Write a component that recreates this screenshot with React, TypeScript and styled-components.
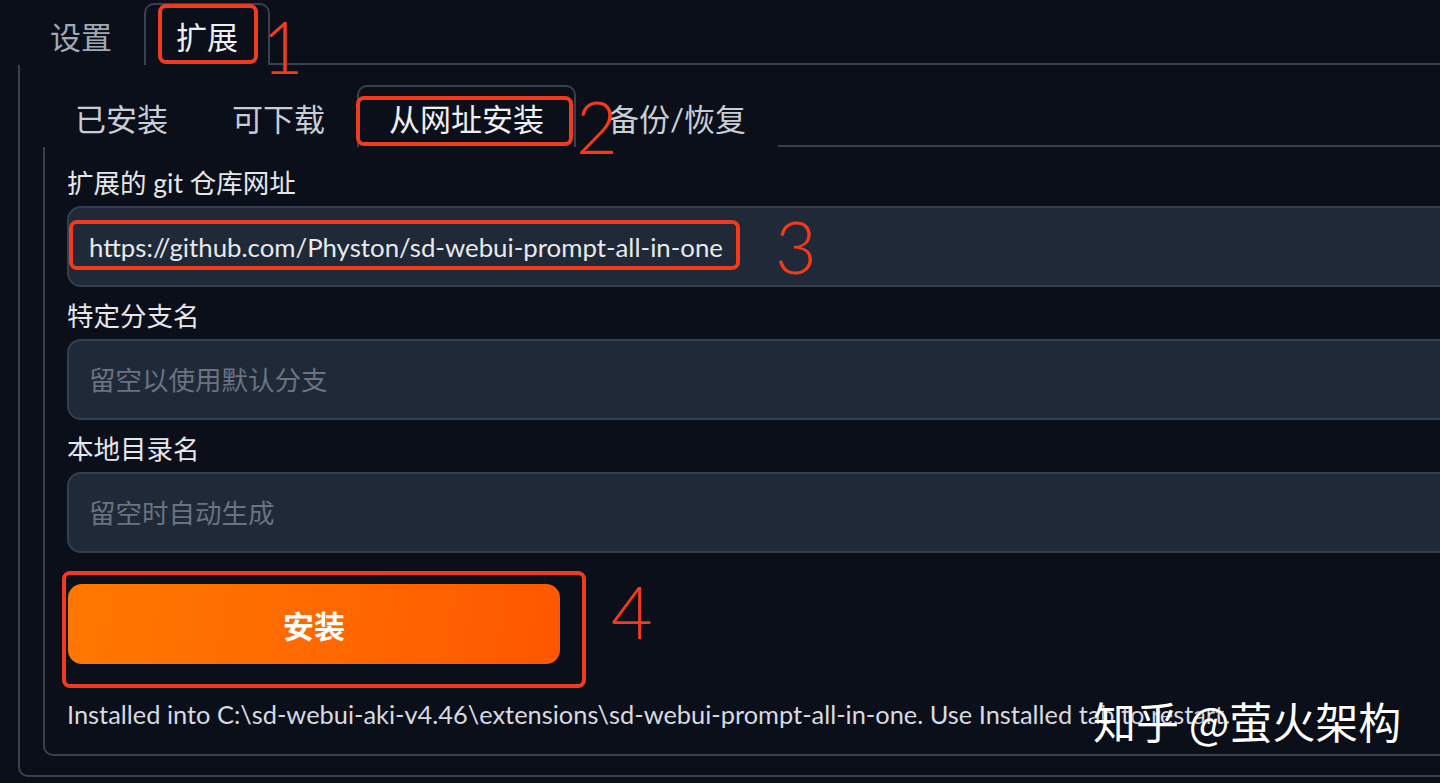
import React from "react";
import styled, { createGlobalStyle } from "styled-components";

const GlobalStyle = createGlobalStyle`
  html, body {
    margin: 0;
    padding: 0;
    background: #0b0f19;
    overflow: hidden;
  }
  body {
    font-family: Lato, "Noto Sans CJK SC", sans-serif;
  }
`;

const Page = styled.div`
  position: relative;
  width: 1440px;
  height: 783px;
  overflow: hidden;
  box-sizing: border-box;
  padding: 3px 0 0 18px;
`;

const TabNav = styled.div`
  display: flex;
  position: relative;
  z-index: 1;
`;

const Tab = styled.div<{ $active?: boolean; $dim?: boolean }>`
  box-sizing: border-box;
  height: 62px;
  padding: 0 30px;
  margin-bottom: -2px;
  display: flex;
  align-items: center;
  font-size: 31px;
  color: ${(p) => (p.$active ? "#eef0f3" : p.$dim ? "#a3a9b3" : "#c9cdd4")};
  background: #0b0f19;
  border: 2px solid ${(p) => (p.$active ? "#374151" : "transparent")};
  border-bottom: none;
  border-radius: 10px 10px 0 0;
`;

const Panel = styled.div<{ $pad: string }>`
  box-sizing: border-box;
  width: 1520px;
  border: 2px solid #374151;
  border-radius: 0 10px 10px 10px;
  padding: ${(p) => p.$pad};
`;

const Field = styled.div`
  display: flex;
  flex-direction: column;
  gap: 7px;
  margin-bottom: 14px;
`;

const Label = styled.label`
  font-size: 26.5px;
  line-height: 31px;
  color: #e5e7eb;
`;

const Input = styled.input`
  box-sizing: border-box;
  height: 81px;
  width: 100%;
  padding: 0 20px;
  background: #1f2937;
  border: 2px solid #333e4e;
  border-radius: 14px;
  outline: none;
  font-family: inherit;
  font-size: 25.8px;
  color: #e8eaed;

  &::placeholder {
    color: #6b7280;
    font-size: 26.5px;
  }
`;

const InstallButton = styled.button`
  box-sizing: border-box;
  width: 492px;
  height: 80px;
  margin: 17px 0 0 1px;
  border: none;
  border-radius: 14px;
  background: linear-gradient(100deg, #ff7800 0%, #ff6a00 50%, #ff5700 100%);
  color: #ffffff;
  font-family: inherit;
  font-size: 31px;
  font-weight: 700;
  cursor: pointer;
`;

const Status = styled.div`
  margin-top: 35px;
  font-size: 25.4px;
  line-height: 30px;
  color: #d7dae0;
  white-space: nowrap;
`;

const Mark = styled.div<{ $x: number; $y: number; $w: number; $h: number }>`
  position: absolute;
  z-index: 5;
  left: ${(p) => p.$x}px;
  top: ${(p) => p.$y}px;
  width: ${(p) => p.$w}px;
  height: ${(p) => p.$h}px;
  box-sizing: border-box;
  border: 4px solid #f23a1d;
  border-radius: 8px;
  pointer-events: none;
`;

const Step = styled.div<{ $x: number; $y: number }>`
  position: absolute;
  z-index: 5;
  left: ${(p) => p.$x}px;
  top: ${(p) => p.$y}px;
  font-family: Lato, "Liberation Sans", sans-serif;
  font-weight: 300;
  font-size: 72px;
  line-height: 72px;
  color: #f23a1d;
`;

const Watermark = styled.div`
  position: absolute;
  z-index: 5;
  left: 1093px;
  top: 692px;
  font-family: "Noto Sans CJK SC", sans-serif;
  font-size: 43px;
  line-height: 56px;
  color: #ffffff;
  text-shadow: 0 0 2px rgba(0, 0, 0, 0.6);
  white-space: nowrap;
`;

const App: React.FC = () => {
  return (
    <>
      <GlobalStyle />
      <Page>
        <TabNav>
          <Tab $dim>设置</Tab>
          <Tab $active>扩展</Tab>
        </TabNav>
        <Panel $pad="20px 0 19px 23px">
          <TabNav>
            <Tab>已安装</Tab>
            <Tab>可下载</Tab>
            <Tab $active>从网址安装</Tab>
            <Tab>备份/恢复</Tab>
          </TabNav>
          <Panel $pad="21px 0 25px 22px">
            <Field>
              <Label>扩展的 git 仓库网址</Label>
              <Input defaultValue="https://github.com/Physton/sd-webui-prompt-all-in-one" />
            </Field>
            <Field>
              <Label>特定分支名</Label>
              <Input placeholder="留空以使用默认分支" />
            </Field>
            <Field>
              <Label>本地目录名</Label>
              <Input placeholder="留空时自动生成" />
            </Field>
            <InstallButton>安装</InstallButton>
            <Status>
              Installed into C:\sd-webui-aki-v4.46\extensions\sd-webui-prompt-all-in-one. Use Installed tab to restart.
            </Status>
          </Panel>
        </Panel>

        <Mark $x={158} $y={4} $w={100} $h={60} />
        <Step $x={262} $y={10}>1</Step>
        <Mark $x={356} $y={96} $w={217} $h={50} />
        <Step $x={576} $y={90}>2</Step>
        <Mark $x={69} $y={220} $w={671} $h={50} />
        <Step $x={775} $y={210}>3</Step>
        <Mark $x={62} $y={571} $w={524} $h={117} />
        <Step $x={611} $y={575}>4</Step>
        <Watermark>知乎 @萤火架构</Watermark>
      </Page>
    </>
  );
};

export default App;
